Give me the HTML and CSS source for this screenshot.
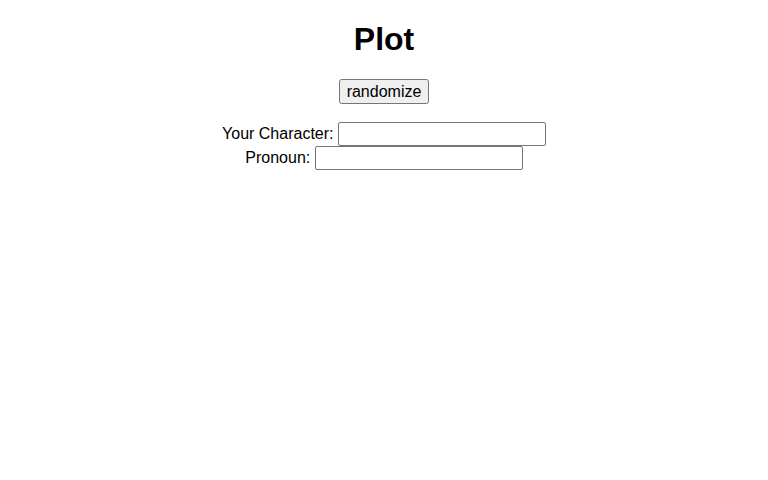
FILE: index.html
```html
<!DOCTYPE html>
<html>
<head>
<meta charset="utf-8">
<link rel="stylesheet" href="styles.css">
</head>
<body>
<div class="page">
  <h1 class="title">Plot</h1>
  <button class="btn">randomize</button>
  <div class="fields">
    <label class="field">Your Character: <input class="inp" type="text"></label>
    <label class="field">Pronoun: <input class="inp" type="text"></label>
  </div>
</div>
</body>
</html>
```
FILE: styles.css
```css
body {
  margin: 0 8px 8px;
  font-family: "Liberation Sans", Arial, sans-serif;
  font-size: 16px;
  color: #000;
  background: #fff;
}
.page {
  text-align: center;
}
.title {
  font-size: 32px;
  margin: 21px 0;
}
.btn {
  font-family: inherit;
  font-size: 16px;
  padding: 2px 6px 1px;
}
.fields {
  margin-top: 20px;
  display: flex;
  flex-direction: column;
  align-items: center;
}
.field {
  display: block;
  height: 24px;
}
.inp {
  font-family: inherit;
  font-size: 13.33px;
  box-sizing: border-box;
  width: 208px;
  height: 24px;
  padding: 1px 2px;
  margin: -2px 0 0;
  border: 1px solid #767676;
  border-radius: 2px;
  vertical-align: middle;
}
```
